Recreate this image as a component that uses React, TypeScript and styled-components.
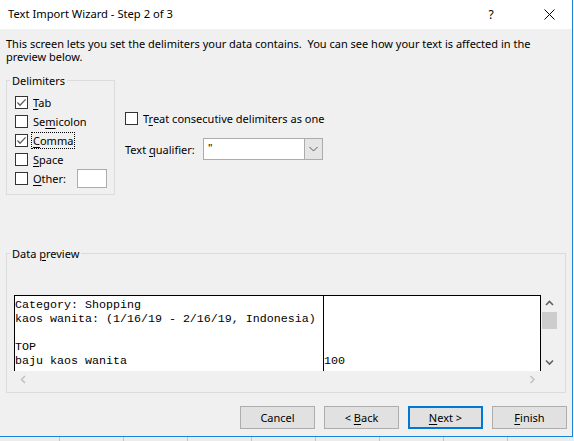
import React from 'react';
import styled, { createGlobalStyle } from 'styled-components';

const GlobalStyle = createGlobalStyle`
  html, body { margin: 0; padding: 0; background: #ffffff; }
  body {
    font-family: "Noto Sans", "Liberation Sans", sans-serif;
    font-size: 11px;
    color: #000;
    -webkit-font-smoothing: antialiased;
  }
  #root { width: 574px; height: 441px; overflow: hidden; }
`;

const Screen = styled.div`
  width: 574px;
  height: 441px;
  display: flex;
  flex-direction: column;
  background: #ffffff;
  overflow: hidden;
`;

const Window = styled.div`
  width: 572px;
  height: 436px;
  border-right: 1px solid #1883d7;
  border-bottom: 1px solid #1883d7;
  display: flex;
  flex-direction: column;
  background: #f0f0f0;
  flex: none;
`;

const SheetStrip = styled.div`
  flex: 1;
  background-color: #ececec;
  background-image: repeating-linear-gradient(90deg, transparent 0 63px, #c4c4c4 63px 64px);
  background-position: -4px 0;
`;

const TitleBar = styled.div`
  height: 29px;
  flex: none;
  background: #ffffff;
  display: flex;
  align-items: center;
  padding-left: 8px;
`;

const Title = styled.div`
  flex: 1;
  font-size: 11.2px;
  line-height: 16px;
  padding-bottom: 1px;
`;

const CaptionButton = styled.div<{ $w: number; $mr?: number }>`
  width: ${(p) => p.$w}px;
  margin-right: ${(p) => p.$mr ?? 0}px;
  height: 29px;
  display: flex;
  align-items: center;
  justify-content: center;
  font-size: 12px;
`;

const Body = styled.div`
  flex: 1;
  display: flex;
  flex-direction: column;
  padding: 8px 0 0 6px;
`;

const Intro = styled.div`
  line-height: 13px;
  white-space: nowrap;
`;

const OptionsRow = styled.div`
  display: flex;
  align-items: flex-start;
  margin-top: 11px;
`;

const Group = styled.fieldset<{ $w: number; $pl: number; $pt: number; $pr: number; $pb: number }>`
  margin: 0;
  width: ${(p) => p.$w}px;
  box-sizing: border-box;
  border: 1px solid #dcdcdc;
  padding: ${(p) => `${p.$pt}px ${p.$pr}px ${p.$pb}px ${p.$pl}px`};
  min-width: 0;
`;

const GroupLegend = styled.legend<{ $ml: number }>`
  padding: 0 2px;
  margin-left: ${(p) => p.$ml}px;
  line-height: 13px;
`;

const DelimRow = styled.div`
  height: 19px;
  display: flex;
  align-items: center;
  gap: 3px;
`;

const Box = styled.span`
  width: 13px;
  height: 13px;
  box-sizing: border-box;
  border: 1px solid #333333;
  background: #ffffff;
  display: flex;
  align-items: center;
  justify-content: center;
  flex: none;
`;

const OptLabel = styled.span<{ $focus?: boolean }>`
  padding: 0 1px;
  line-height: 15px;
  border: 1px dotted ${(p) => (p.$focus ? '#000' : 'transparent')};
  white-space: nowrap;
`;

const Key = styled.span`
  text-decoration: underline;
  text-underline-offset: 2px;
`;

const OtherInput = styled.span`
  margin-left: auto;
  width: 30px;
  height: 19px;
  box-sizing: border-box;
  border: 1px solid #acacac;
  background: #ffffff;
`;

const SideOptions = styled.div`
  display: flex;
  flex-direction: column;
  margin-left: 10px;
  padding-top: 35px;
`;

const QualifierRow = styled.div`
  display: flex;
  align-items: center;
  margin-top: 10px;
  height: 22px;
`;

const QualifierLabel = styled.span`
  width: 78px;
  white-space: nowrap;
`;

const Select = styled.div`
  width: 120px;
  height: 22px;
  box-sizing: border-box;
  border: 1px solid #acacac;
  background: #ffffff;
  display: flex;
`;

const SelectValue = styled.span`
  flex: 1;
  padding-left: 4px;
  line-height: 18px;
`;

const SelectButton = styled.span`
  width: 17px;
  border-left: 1px solid #acacac;
  background: #e5e5e5;
  display: flex;
  align-items: center;
  justify-content: center;
`;

const PreviewWrap = styled.div`
  margin-top: 52px;
`;

const ScrollView = styled.div`
  display: grid;
  grid-template-columns: 1fr 17px;
  grid-template-rows: 76px 17px;
`;

const Sheet = styled.div`
  background: #ffffff;
  border: 1px solid #000;
  border-bottom: none;
  display: flex;
  overflow: hidden;
  font-family: "Liberation Mono", "Courier New", monospace;
  font-size: 11.67px;
  line-height: 14px;
  padding-top: 2px;
`;

const SheetColumn = styled.div<{ $w?: number; $divider?: boolean }>`
  ${(p) => (p.$w ? `width: ${p.$w}px; flex: none;` : 'flex: 1;')}
  ${(p) => (p.$divider ? 'border-right: 1px solid #000; margin-top: -2px; padding-top: 2px;' : '')}
  white-space: pre;
`;

const Cell = styled.div`
  height: 14px;
`;

const VScroll = styled.div`
  background: #f0f0f0;
  display: flex;
  flex-direction: column;
  align-items: center;
`;

const Thumb = styled.div`
  width: 15px;
  height: 17px;
  background: #cdcdcd;
`;

const TrackGap = styled.div`
  flex: 1;
`;

const ArrowCell = styled.div<{ $h: number }>`
  height: ${(p) => p.$h}px;
  width: 17px;
  display: flex;
  align-items: center;
  justify-content: center;
`;

const HScroll = styled.div`
  background: #f0f0f0;
  display: flex;
  align-items: center;
  justify-content: space-between;
  padding: 0 5px 0 6px;
`;

const Corner = styled.div`
  background: #f0f0f0;
`;

const ButtonRow = styled.div`
  display: flex;
  justify-content: flex-end;
  gap: 9px;
  margin-top: 13px;
  padding-right: 5px;
`;

const Button = styled.button<{ $default?: boolean }>`
  width: 75px;
  height: 23px;
  box-sizing: border-box;
  margin: 0;
  padding: 0;
  font: inherit;
  color: #000;
  background: #e1e1e1;
  border: ${(p) => (p.$default ? '2px solid #0078d7' : '1px solid #adadad')};
  display: flex;
  align-items: center;
  justify-content: center;
  white-space: pre;
`;

const CheckMark = () => (
  <svg width="11" height="11" viewBox="0 0 11 11">
    <path d="M1.5 5.5 L4 8.2 L9.6 2.4" fill="none" stroke="#5c5c5c" strokeWidth="1.3" />
  </svg>
);

const CheckBox = ({ checked }: { checked?: boolean }) => <Box>{checked ? <CheckMark /> : null}</Box>;

const Chevron = ({ dir, color }: { dir: 'up' | 'down' | 'left' | 'right'; color: string }) => {
  const d = {
    up: 'M1 5 L4.5 1.5 L8 5',
    down: 'M1 1.5 L4.5 5 L8 1.5',
    left: 'M5 1 L1.5 4.5 L5 8',
    right: 'M1.5 1 L5 4.5 L1.5 8',
  }[dir];
  const horiz = dir === 'left' || dir === 'right';
  return (
    <svg width={horiz ? 7 : 9} height={horiz ? 9 : 7} viewBox={horiz ? '0 0 7 9' : '0 0 9 7'}>
      <path d={d} fill="none" stroke={color} strokeWidth="1.6" />
    </svg>
  );
};

const DropChevron = () => (
  <svg width="9" height="6" viewBox="0 0 9 6">
    <path d="M0.5 1 L4.5 5 L8.5 1" fill="none" stroke="#5a5a5a" strokeWidth="1" />
  </svg>
);

const CloseIcon = () => (
  <svg width="11" height="11" viewBox="0 0 11 11">
    <path d="M0.5 0.5 L10.5 10.5 M10.5 0.5 L0.5 10.5" stroke="#000" strokeWidth="1" />
  </svg>
);

const col1 = ['Category: Shopping', 'kaos wanita: (1/16/19 - 2/16/19, Indonesia)', '', 'TOP', 'baju kaos wanita'];
const col2 = ['', '', '', '', '100'];

export default function App() {
  return (
    <>
      <GlobalStyle />
      <Screen>
        <Window>
          <TitleBar>
            <Title>Text Import Wizard - Step 2 of 3</Title>
            <CaptionButton $w={24} $mr={23}>?</CaptionButton>
            <CaptionButton $w={46}>
              <CloseIcon />
            </CaptionButton>
          </TitleBar>
          <Body>
            <Intro>
              This screen lets you set the delimiters your data contains.&nbsp; You can see how your text is affected in the
              <br />
              preview below.
            </Intro>
            <OptionsRow>
              <Group $w={109} $pl={8} $pt={6} $pr={7} $pb={6}>
                <GroupLegend $ml={-5}>Delimiters</GroupLegend>
                <DelimRow>
                  <CheckBox checked />
                  <OptLabel>
                    <Key>T</Key>ab
                  </OptLabel>
                </DelimRow>
                <DelimRow>
                  <CheckBox />
                  <OptLabel>
                    Se<Key>m</Key>icolon
                  </OptLabel>
                </DelimRow>
                <DelimRow>
                  <CheckBox checked />
                  <OptLabel $focus>
                    <Key>C</Key>omma
                  </OptLabel>
                </DelimRow>
                <DelimRow>
                  <CheckBox />
                  <OptLabel>
                    <Key>S</Key>pace
                  </OptLabel>
                </DelimRow>
                <DelimRow>
                  <CheckBox />
                  <OptLabel>
                    <Key>O</Key>ther:
                  </OptLabel>
                  <OtherInput />
                </DelimRow>
              </Group>
              <SideOptions>
                <DelimRow>
                  <CheckBox />
                  <OptLabel>
                    T<Key>r</Key>eat consecutive delimiters as one
                  </OptLabel>
                </DelimRow>
                <QualifierRow>
                  <QualifierLabel>
                    Text <Key>q</Key>ualifier:
                  </QualifierLabel>
                  <Select>
                    <SelectValue>"</SelectValue>
                    <SelectButton>
                      <DropChevron />
                    </SelectButton>
                  </Select>
                </QualifierRow>
              </SideOptions>
            </OptionsRow>
            <PreviewWrap>
              <Group $w={560} $pl={7} $pt={35} $pr={7} $pb={4}>
                <GroupLegend $ml={-4}>
                  Data <Key>p</Key>review
                </GroupLegend>
                <ScrollView>
                  <Sheet>
                    <SheetColumn $w={308} $divider>
                      {col1.map((t, i) => (
                        <Cell key={i}>{t}</Cell>
                      ))}
                    </SheetColumn>
                    <SheetColumn>
                      {col2.map((t, i) => (
                        <Cell key={i}>{t}</Cell>
                      ))}
                    </SheetColumn>
                  </Sheet>
                  <VScroll>
                    <ArrowCell $h={17}>
                      <Chevron dir="up" color="#606060" />
                    </ArrowCell>
                    <Thumb />
                    <TrackGap />
                    <ArrowCell $h={17}>
                      <Chevron dir="down" color="#606060" />
                    </ArrowCell>
                  </VScroll>
                  <HScroll>
                    <Chevron dir="left" color="#c2c2c2" />
                    <Chevron dir="right" color="#c2c2c2" />
                  </HScroll>
                  <Corner />
                </ScrollView>
              </Group>
            </PreviewWrap>
            <ButtonRow>
              <Button>
                <span>Cancel</span>
              </Button>
              <Button>
                <span>
                  &lt; <Key>B</Key>ack
                </span>
              </Button>
              <Button $default>
                <span>
                  <Key>N</Key>ext &gt;
                </span>
              </Button>
              <Button>
                <span>
                  <Key>F</Key>inish
                </span>
              </Button>
            </ButtonRow>
          </Body>
        </Window>
        <SheetStrip />
      </Screen>
    </>
  );
}
